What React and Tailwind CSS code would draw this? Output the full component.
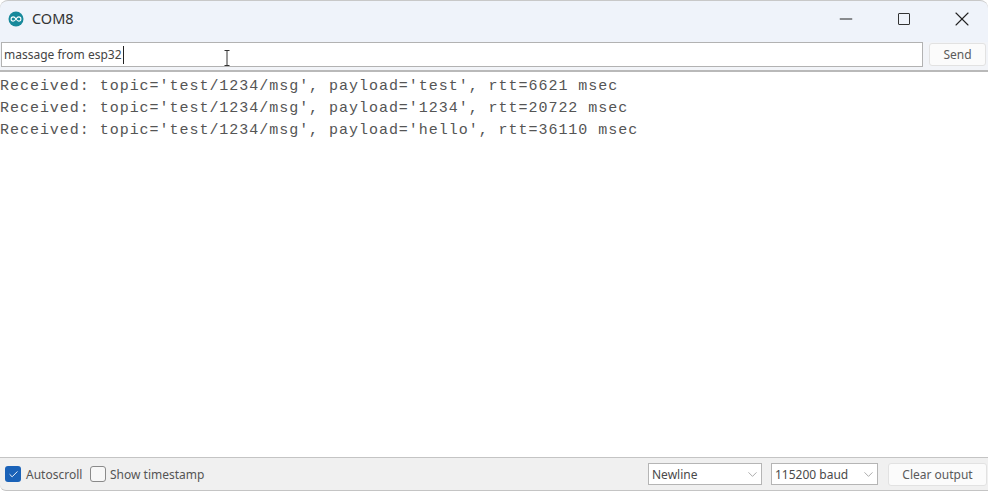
import { ChevronDown, Check, Minus, X } from "lucide-react";

const lines = [
  "Received: topic='test/1234/msg', payload='test', rtt=6621 msec",
  "Received: topic='test/1234/msg', payload='1234', rtt=20722 msec",
  "Received: topic='test/1234/msg', payload='hello', rtt=36110 msec",
];

const Select = ({ label, width }) => (
  <div className={`flex items-center justify-between h-[22px] pl-[3px] pr-px bg-white border border-[#b5b5b5] text-[12px] text-[#4a4a4a] ${width}`}>
    <span className="pt-px">{label}</span>
    <ChevronDown size={15} strokeWidth={1.1} className="text-[#888]" />
  </div>
);

const Button = ({ children, width }) => (
  <button className={`h-[23px] pt-px bg-[#fbfbfb] border border-[#e2e2e2] rounded-[3px] text-[12px] text-[#5a5a5a] ${width}`}>
    {children}
  </button>
);

export default function App() {
  return (
    <div className="w-[988px] h-[493px] flex flex-col bg-white overflow-hidden font-['Noto_Sans','Liberation_Sans',sans-serif]">
      <div className="h-[42px] shrink-0 flex items-center bg-[#eff3fa] border-t border-[#c8c8c8] rounded-t-[8px] pl-[8px] pb-[5px]">
        <svg width="16" height="16" viewBox="0 0 16 16" className="shrink-0">
          <circle cx="8" cy="8" r="7.5" fill="#17899b" />
          <path d="M5.2 5.9a2.1 2.1 0 1 0 0 4.2c1.4 0 2.2-1.2 2.8-2.1.6-.9 1.4-2.1 2.8-2.1a2.1 2.1 0 1 1 0 4.2c-1.4 0-2.2-1.2-2.8-2.1-.6-.9-1.4-2.1-2.8-2.1z" fill="none" stroke="#fff" strokeWidth="1.1" />
        </svg>
        <span className="ml-[8px] text-[14.5px] text-[#333]">COM8</span>
        <div className="ml-auto flex items-center">
          <Minus size={20} strokeWidth={1.2} className="text-[#222] mr-[42px]" />
          <div className="w-[12px] h-[12px] border-[1.5px] border-[#333] rounded-[1px] mr-[40px]" />
          <X size={24} strokeWidth={1.1} className="text-[#222] mr-[14px]" />
        </div>
      </div>

      <div className="h-[30px] shrink-0 flex items-start pl-px bg-[#f2f4f8] border-b-2 border-[#b9b9b9]">
        <div className="relative w-[922px] h-[25px] flex items-center bg-white border border-[#b2b2b2] pl-[2px] text-[12px] text-[#444]">
          <span className="border-r border-[#222] pr-px leading-[18px]">massage from esp32</span>
          <span className="absolute left-[222px] top-[7px] text-[#333]">
            <svg width="6" height="16" viewBox="0 0 6 16">
              <path d="M0.5 0.5h5M3 0.5v15M0.5 15.5h5" stroke="#333" fill="none" strokeWidth="1" />
            </svg>
          </span>
        </div>
        <div className="flex ml-[6px] mt-px">
          <Button width="w-[57px]">Send</Button>
        </div>
      </div>

      <div className="flex-1 pt-[4px] font-['Liberation_Mono','Courier_New',monospace] text-[15px] leading-[22px] tracking-[0.97px] text-[#555] whitespace-pre">
        {lines.map((line) => (
          <div key={line}>{line}</div>
        ))}
      </div>

      <div className="h-[34px] shrink-0 mb-[2px] flex items-center bg-[#f0f0f0] border-t border-b border-[#c4c4c4] rounded-bl-[6px] pl-[5px] pr-px text-[12px] text-[#555]">
        <span className="w-[16px] h-[16px] flex items-center justify-center rounded-[3px] bg-[#1a62b8]">
          <Check size={11} strokeWidth={2} className="text-white" />
        </span>
        <span className="ml-[5px] pt-[2px] w-[56px]">Autoscroll</span>
        <span className="ml-[8px] w-[16px] h-[16px] rounded-[3px] bg-[#f7f7f7] border border-[#8a8a8a]" />
        <span className="ml-[4px] pt-[2px]">Show timestamp</span>
        <div className="ml-auto flex items-center">
          <Select label="Newline" width="w-[114px]" />
          <div className="w-[9px]" />
          <Select label="115200 baud" width="w-[107px]" />
          <div className="w-[10px]" />
          <Button width="w-[99px]">Clear output</Button>
        </div>
      </div>
    </div>
  );
}
